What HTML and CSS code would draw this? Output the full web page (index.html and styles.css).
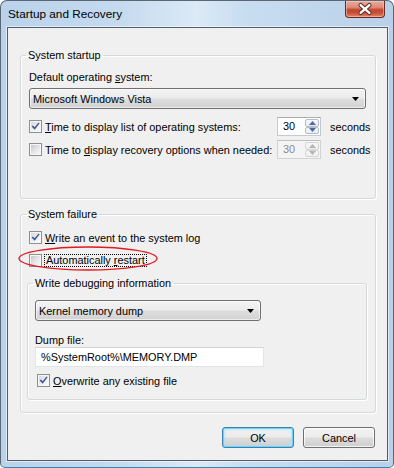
FILE: index.html
```html
<!DOCTYPE html>
<html>
<head>
<meta charset="utf-8">
<title>Startup and Recovery</title>
<link rel="stylesheet" href="styles.css">
</head>
<body>
<div class="window">
  <div class="titlebar">
    <span class="title">Startup and Recovery</span>
    <div class="close">
      <svg width="39" height="16" viewBox="0 0 39 16">
        <path d="M15 4 L24 12 M24 4 L15 12" stroke="#5a2a22" stroke-width="4.4" stroke-linecap="round"/>
        <path d="M15 4 L24 12 M24 4 L15 12" stroke="#ffffff" stroke-width="2.4" stroke-linecap="round"/>
      </svg>
    </div>
  </div>
  <div class="client">
    <fieldset class="group g1">
      <legend>System startup</legend>
      <div class="label">Default operating <u>s</u>ystem:</div>
      <div class="combo c1">
        <span class="combo-text">Microsoft Windows Vista</span>
        <svg class="arrow" width="7" height="4" viewBox="0 0 7 4"><path d="M0 0 H7 L3.5 4 Z" fill="#000"/></svg>
      </div>
      <div class="spinrow r1">
        <div class="check">
          <span class="cb on"><svg width="9" height="9" viewBox="0 0 9 9"><path d="M0.6 4.6 L2 3.4 L3.6 5.2 L7.6 0.4 L8.6 1.3 L3.7 7.8 Z" fill="#3e5694"/></svg></span>
          <span class="ctext"><u>T</u>ime to display list of operating systems:</span>
        </div>
        <div class="spin">
          <span class="val">30</span>
          <span class="btns">
            <span class="sb up"><svg width="7" height="4" viewBox="0 0 7 4"><path d="M0 4 H7 L3.5 0 Z" fill="#4e6a9c"/></svg></span>
            <span class="sb down"><svg width="7" height="4" viewBox="0 0 7 4"><path d="M0 0 H7 L3.5 4 Z" fill="#4e6a9c"/></svg></span>
          </span>
        </div>
        <span class="unit">seconds</span>
      </div>
      <div class="spinrow r2">
        <div class="check">
          <span class="cb"></span>
          <span class="ctext">Time to <u>d</u>isplay recovery options when needed:</span>
        </div>
        <div class="spin disabled">
          <span class="val">30</span>
          <span class="btns">
            <span class="sb up"><svg width="7" height="4" viewBox="0 0 7 4"><path d="M0 4 H7 L3.5 0 Z" fill="#b4b4b4"/></svg></span>
            <span class="sb down"><svg width="7" height="4" viewBox="0 0 7 4"><path d="M0 0 H7 L3.5 4 Z" fill="#b4b4b4"/></svg></span>
          </span>
        </div>
        <span class="unit">seconds</span>
      </div>
    </fieldset>

    <fieldset class="group g2">
      <legend>System failure</legend>
      <div class="check row w1">
        <span class="cb on"><svg width="9" height="9" viewBox="0 0 9 9"><path d="M0.6 4.6 L2 3.4 L3.6 5.2 L7.6 0.4 L8.6 1.3 L3.7 7.8 Z" fill="#3e5694"/></svg></span>
        <span class="ctext"><u>W</u>rite an event to the system log</span>
      </div>
      <div class="check row w2">
        <span class="cb"></span>
        <span class="ctext focus">Automatically <u>r</u>estart</span>
      </div>
      <fieldset class="group g3">
        <legend>Write debugging information</legend>
        <div class="combo c2">
          <span class="combo-text">Kernel memory dump</span>
          <svg class="arrow" width="7" height="4" viewBox="0 0 7 4"><path d="M0 0 H7 L3.5 4 Z" fill="#000"/></svg>
        </div>
        <div class="label dlabel">Dump file:</div>
        <div class="textbox">%SystemRoot%\MEMORY.DMP</div>
        <div class="check row w3">
          <span class="cb on"><svg width="9" height="9" viewBox="0 0 9 9"><path d="M0.6 4.6 L2 3.4 L3.6 5.2 L7.6 0.4 L8.6 1.3 L3.7 7.8 Z" fill="#3e5694"/></svg></span>
          <span class="ctext"><u>O</u>verwrite any existing file</span>
        </div>
      </fieldset>
    </fieldset>

    <div class="buttons">
      <button class="btn default">OK</button>
      <button class="btn">Cancel</button>
    </div>

    <svg class="annotation" width="141" height="25" viewBox="0 0 141 25">
      <ellipse cx="70" cy="12.5" rx="69" ry="11.5" fill="none" stroke="#e3191e" stroke-width="1.3"/>
    </svg>
  </div>
</div>
</body>
</html>
```

FILE: styles.css
```css
* {
  box-sizing: border-box;
}

html, body {
  margin: 0;
  padding: 0;
}

body {
  width: 394px;
  height: 468px;
  overflow: hidden;
  background: #ffffff;
  font-family: "Liberation Sans", Arial, sans-serif;
  font-size: 10.9px;
  color: #000;
}

.window {
  width: 394px;
  height: 468px;
  border: 1px solid #5a6876;
  border-bottom-color: #2e88b0;
  border-radius: 7px 7px 5px 5px;
  background: linear-gradient(90deg, #bad2ea 0%, #c5daef 30%, #dce9f6 50%, #c9ddf1 62%, #b8d0e9 100%);
  display: flex;
  flex-direction: column;
  overflow: hidden;
}

.titlebar {
  height: 26px;
  display: flex;
  align-items: flex-start;
  padding-left: 7px;
}

.title {
  margin-top: 6px;
  line-height: 14px;
  font-size: 11.8px;
  color: #000;
}

.close {
  margin-left: auto;
  margin-right: 8px;
  width: 40px;
  height: 17px;
  border: 1px solid #6a2a20;
  border-top: none;
  border-radius: 0 0 4px 4px;
  background: linear-gradient(180deg, #e9ab9b 0%, #dc8a77 40%, #c4452f 55%, #c7503a 75%, #e2876a 100%);
  box-shadow: inset 0 0 0 1px rgba(255, 220, 210, 0.45);
  display: flex;
  align-items: center;
  justify-content: center;
}

.client {
  position: relative;
  margin: 0 5px 0 6px;
  height: 434px;
  border: 1px solid #4f5e6c;
  background: #f0f0f0;
  box-shadow: 0 0 0 1px rgba(255, 255, 255, 0.55);
  display: flex;
  flex-direction: column;
}

.group {
  margin: 0;
  border: 1px solid #d5d9dc;
  border-radius: 3px;
  box-shadow: inset 1px 1px 0 #ffffff, 1px 1px 0 #ffffff;
  min-width: 0;
}

.group legend {
  padding: 0 2px;
  line-height: 14px;
  height: 14px;
}

.g1 {
  margin: 20px 11px 0 12px;
  padding: 8px 9px 39px 8px;
}

.g1 legend {
  margin-left: -3px;
}

.g2 {
  margin: 8px 11px 0 12px;
  padding: 7px 8px 12px 6px;
}

.g2 legend {
  margin-left: -1px;
}

.g3 {
  margin: 6px 0 0 0;
  padding: 10px 8px 9px 7px;
}

.g3 legend {
  margin-left: -2px;
}

.label {
  line-height: 14px;
}

.combo {
  margin-top: 4px;
  height: 21px;
  border: 1px solid #707070;
  border-radius: 3px;
  background: linear-gradient(180deg, #f3f3f3 0%, #ececec 48%, #dedede 52%, #d2d2d2 100%);
  box-shadow: inset 0 0 0 1px rgba(255, 255, 255, 0.6);
  display: flex;
  align-items: center;
  padding: 0 6px 0 3px;
}

.combo-text {
  flex: 1;
  line-height: 14px;
}

.arrow {
  display: block;
}

.c2 {
  margin-top: 0;
  width: 226px;
}

.spinrow {
  display: grid;
  grid-template-columns: 248px 44px 49px;
  align-items: center;
  height: 19px;
  margin-right: -4px;
}

.r1 {
  margin-top: 8px;
}

.r2 {
  margin-top: 4px;
}

.check {
  display: flex;
  align-items: center;
  gap: 3px;
  height: 19px;
}

.row {
  margin-left: 2px;
}

.w2 {
  margin-top: 4px;
}

.w3 {
  margin-top: 4px;
}

.ctext {
  line-height: 14px;
  white-space: nowrap;
}

.cb {
  width: 13px;
  height: 13px;
  flex: none;
  border: 1px solid #8e8f8f;
  padding: 1px;
  background: linear-gradient(135deg, #c3c6cb 0%, #e6e7e9 55%, #f7f7f7 100%) content-box, #f7f7f7;
  display: flex;
  align-items: center;
  justify-content: center;
}

.cb.on {
  background: linear-gradient(135deg, #d6d8dc 0%, #eeeff0 55%, #fafafa 100%) content-box, #f7f7f7;
}

.cb svg {
  display: block;
}

.focus {
  border: 1px dotted #000;
  padding: 0 1px;
  line-height: 11px;
  margin-left: -1px;
}

.spin {
  height: 19px;
  border: 1px solid #c5c9d0;
  border-top-color: #abadb3;
  background: #ffffff;
  display: flex;
  align-items: stretch;
}

.spin .val {
  flex: 1;
  line-height: 17px;
  padding-left: 5px;
}

.btns {
  width: 15px;
  display: flex;
  flex-direction: column;
  padding: 1px 1px 1px 0;
}

.sb {
  flex: 1;
  border: 1px solid #b3bdcb;
  border-radius: 2px;
  background: linear-gradient(180deg, #f7f9fb 0%, #e7ebf0 100%);
  display: flex;
  align-items: center;
  justify-content: center;
}

.sb svg {
  display: block;
}

.spin.disabled {
  background: #f4f4f4;
  border-color: #d2d2d2;
  border-top-color: #c0c0c0;
}

.spin.disabled .val {
  color: #8a8a8a;
}

.spin.disabled .sb {
  border-color: #d6d6d6;
  background: linear-gradient(180deg, #f7f7f7 0%, #eeeeee 100%);
}

.unit {
  padding-left: 9px;
  line-height: 14px;
  white-space: nowrap;
}

.dlabel {
  margin-top: 13px;
  line-height: 13px;
}

.textbox {
  width: 229px;
  height: 20px;
  border: 1px solid #e1e4e8;
  border-top-color: #d0d3d8;
  background: #ffffff;
  line-height: 18px;
  padding-left: 5px;
  white-space: nowrap;
}

.buttons {
  display: flex;
  justify-content: flex-end;
  gap: 9px;
  margin-top: 14px;
  padding-right: 12px;
}

.btn {
  width: 72px;
  height: 21px;
  margin: 0;
  padding: 0;
  font-family: inherit;
  font-size: 10.9px;
  color: #000;
  border: 1px solid #707070;
  border-radius: 3px;
  background: linear-gradient(180deg, #f3f3f3 0%, #ececec 48%, #dddddd 52%, #cfcfcf 100%);
  box-shadow: inset 0 0 0 1px rgba(255, 255, 255, 0.75);
}

.btn.default {
  border-color: #3c7fb1;
  background: linear-gradient(180deg, #f2f2f2 0%, #ebebeb 48%, #dddddd 52%, #cfcfcf 100%);
  box-shadow: inset 0 0 0 1px #6fd3f5, inset 0 0 2px 2px rgba(160, 225, 250, 0.6);
}

.annotation {
  position: absolute;
  left: 10px;
  top: 218px;
  pointer-events: none;
}
```
